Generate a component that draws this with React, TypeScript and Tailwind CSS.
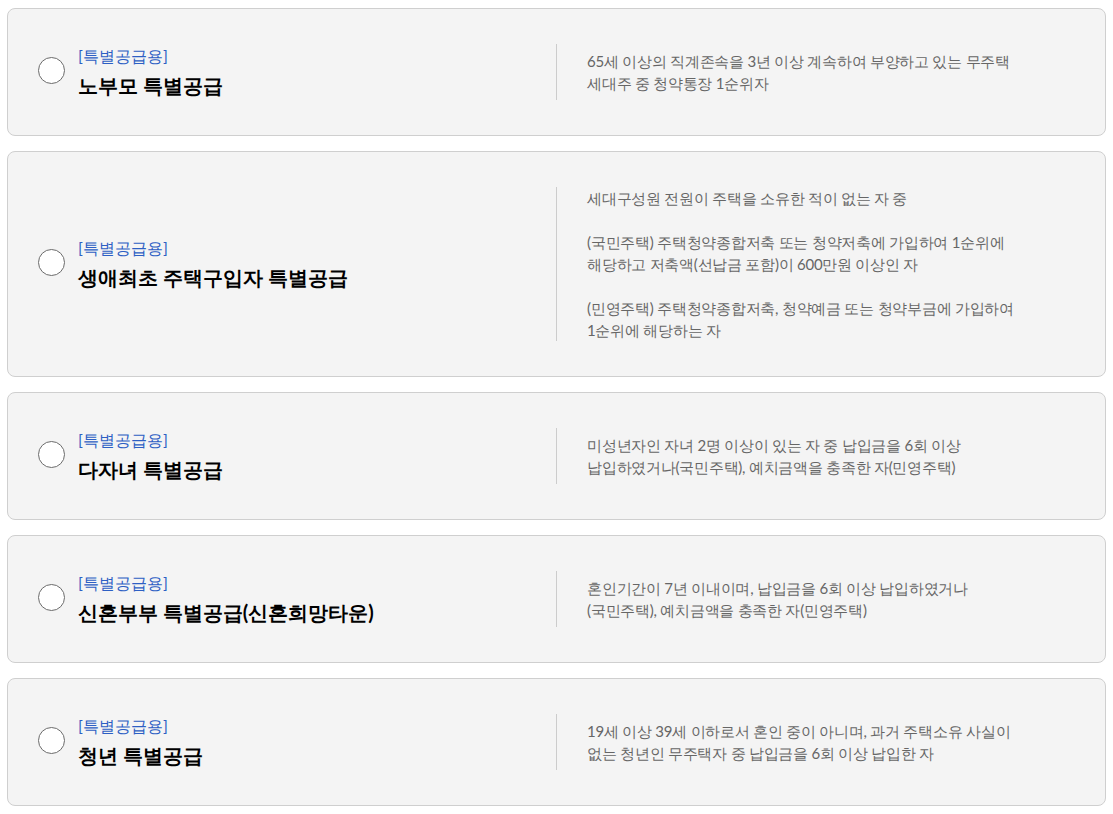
import React from "react";

type Item = { title: string; lines: string[] };

const items: Item[] = [
  {
    title: "노부모 특별공급",
    lines: [
      "65세 이상의 직계존속을 3년 이상 계속하여 부양하고 있는 무주택",
      "세대주 중 청약통장 1순위자",
    ],
  },
  {
    title: "생애최초 주택구입자 특별공급",
    lines: [
      "세대구성원 전원이 주택을 소유한 적이 없는 자 중",
      "",
      "(국민주택) 주택청약종합저축 또는 청약저축에 가입하여 1순위에",
      "해당하고 저축액(선납금 포함)이 600만원 이상인 자",
      "",
      "(민영주택) 주택청약종합저축, 청약예금 또는 청약부금에 가입하여",
      "1순위에 해당하는 자",
    ],
  },
  {
    title: "다자녀 특별공급",
    lines: [
      "미성년자인 자녀 2명 이상이 있는 자 중 납입금을 6회 이상",
      "납입하였거나(국민주택), 예치금액을 충족한 자(민영주택)",
    ],
  },
  {
    title: "신혼부부 특별공급(신혼희망타운)",
    lines: [
      "혼인기간이 7년 이내이며, 납입금을 6회 이상 납입하였거나",
      "(국민주택), 예치금액을 충족한 자(민영주택)",
    ],
  },
  {
    title: "청년 특별공급",
    lines: [
      "19세 이상 39세 이하로서 혼인 중이 아니며, 과거 주택소유 사실이",
      "없는 청년인 무주택자 중 납입금을 6회 이상 납입한 자",
    ],
  },
];

export default function App() {
  return (
    <div
      className="min-h-[814px] bg-white pt-2 pl-[7px] pr-[7px]"
      style={{ fontFamily: "Lato, sans-serif" }}
    >
      <div className="flex flex-col gap-[15px]">
        {items.map((it, i) => (
          <div
            key={i}
            className="flex items-center rounded-lg border border-[#cfcfcf] bg-[#f4f4f4] pl-[30px] py-[35px]"
          >
            <div className="mb-[3px] h-[27px] w-[27px] shrink-0 rounded-full border border-[#6b6b6b] bg-white" />
            <div className="ml-[13px] w-[478px] shrink-0">
              <div className="text-[16px] leading-[24px] text-[#2d5fc4]">[특별공급용]</div>
              <div className="mt-[2px] text-[20px] font-bold leading-[30px] text-black">
                {it.title}
              </div>
            </div>
            <div className="flex min-h-[56px] items-center self-stretch border-l border-[#cccccc] pl-[30px]">
              <div className="text-[15px] leading-[22px] tracking-[-0.25px] text-[#666666]">
                {it.lines.map((l, j) => (
                  <div key={j} className="h-[22px] whitespace-nowrap">
                    {l}
                  </div>
                ))}
              </div>
            </div>
          </div>
        ))}
      </div>
    </div>
  );
}
